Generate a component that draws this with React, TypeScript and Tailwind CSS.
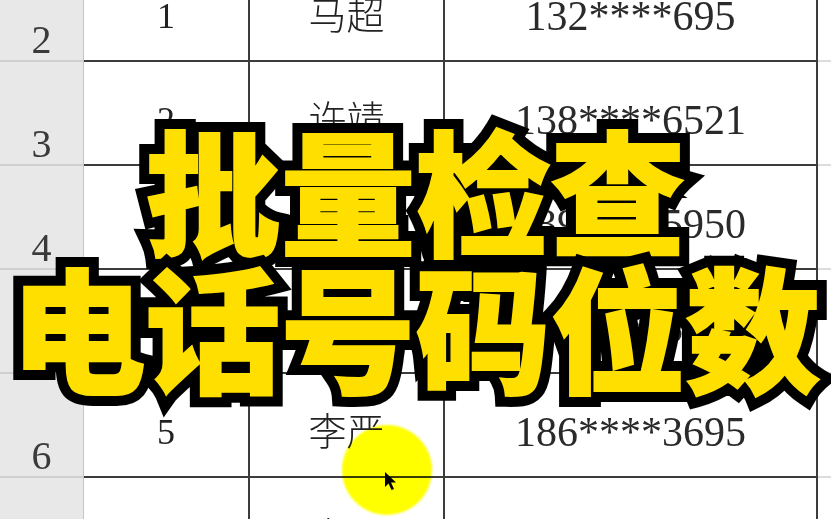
import React from "react";

const rows = [
  { h: "2", n: "1", name: "马超", phone: "132****695" },
  { h: "3", n: "2", name: "许靖", phone: "138****6521" },
  { h: "4", n: "3", name: "糜竺", phone: "139****5950" },
  { h: "5", n: "4", name: "孙乾", phone: "137****8296" },
  { h: "6", n: "5", name: "李严", phone: "186****3695" },
  { h: "7", n: "6", name: "张飞", phone: "135****7841" },
];

const serif = "font-['Liberation_Serif','Noto_Sans_CJK_SC',serif]";

function Title({ text }: { text: string }) {
  return (
    <div className="grid h-[137px] leading-[137px] text-[135px] font-black font-['Noto_Sans_CJK_SC',sans-serif] whitespace-nowrap">
      <span className="[grid-area:1/1] text-black [-webkit-text-stroke:22px_#000] [stroke-linejoin:round]">{text}</span>
      <span className="[grid-area:1/1] text-[#ffdf00] [-webkit-text-stroke:2px_#ffdf00]">{text}</span>
    </div>
  );
}

export default function App() {
  return (
    <div className="relative w-[831px] h-[519px] overflow-hidden bg-white">
      <div className="mt-[-42px] flex flex-col">
        {rows.map((r) => (
          <div key={r.h} className="flex h-[104px]">
            <div className="w-[84px] shrink-0 bg-[#e8e8e8] border-r border-r-[#c4c4c4] border-b-2 border-b-[#cfcfcf] flex items-end justify-center">
              <span className={`${serif} text-[40px] leading-none text-[#3a3a3a]`}>{r.h}</span>
            </div>
            <div className="w-[166px] shrink-0 border-r-2 border-b-2 border-[#3c3c3c] flex items-center justify-center pt-[14px]">
              <span className={`${serif} text-[36px] leading-none text-[#222]`}>{r.n}</span>
            </div>
            <div className="w-[195px] shrink-0 border-r-2 border-b-2 border-[#3c3c3c] flex items-center justify-center pt-[14px]">
              <span className={`${serif} text-[38px] leading-none font-light text-[#222]`}>{r.name}</span>
            </div>
            <div className="w-[373px] shrink-0 border-r-2 border-b-2 border-[#3c3c3c] flex items-center justify-center pt-[14px]">
              <span className={`${serif} text-[42px] leading-none text-[#2a2a2a]`}>{r.phone}</span>
            </div>
            <div className="flex-1 border-b-2 border-[#dcdcdc]" />
          </div>
        ))}
      </div>

      {/* cursor highlight */}
      <div className="absolute left-[342px] top-[425px] w-[90px] h-[90px] rounded-full bg-[#ffff00] mix-blend-multiply blur-[1px]" />
      <svg className="absolute left-[384px] top-[471px]" width="14" height="20" viewBox="0 0 14 20">
        <path d="M1 1 L1 16 L4.5 12.5 L7.5 19 L10 18 L7 11.5 L12 11.5 Z" fill="#000" />
      </svg>

      {/* overlay title */}
      <div className="absolute inset-x-0 top-[119px] flex flex-col items-center">
        <Title text="批量检查" />
        <Title text="电话号码位数" />
      </div>
    </div>
  );
}
